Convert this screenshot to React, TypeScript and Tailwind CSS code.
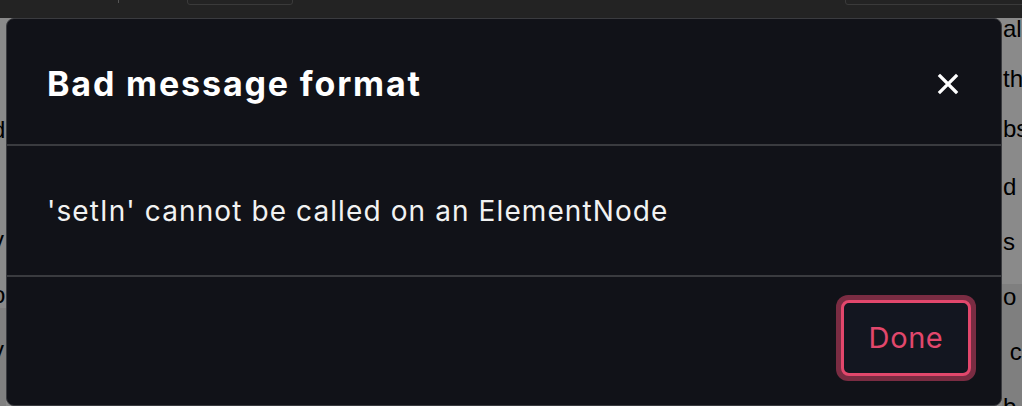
import React from "react";

const rightWords = [
  { t: "al", h: "h-[50px]" },
  { t: "th", h: "h-[50px]" },
  { t: "bs", h: "h-[58px]" },
  { t: "d", h: "h-[55px]" },
  { t: "s", h: "h-[55px]" },
  { t: "o", h: "h-[55px]" },
  { t: " c", h: "h-[55px]" },
  { t: "b", h: "h-[55px]" },
];

export default function App() {
  return (
    <div
      className="relative w-[1022px] h-[406px] overflow-hidden bg-[#8a8a8a]"
      style={{ fontFamily: '"Liberation Sans", Arial, sans-serif' }}
    >
      {/* dimmed page header */}
      <div className="h-[18px] bg-[#232323] relative">
        <div className="absolute left-[187px] top-[-6px] w-[106px] h-[11px] rounded-[3px] border border-[#3a3a3a]" />
        <div className="absolute left-[845px] top-[-6px] w-[200px] h-[11px] rounded-[3px] border border-[#3a3a3a]" />
        <div className="absolute left-[118px] top-[0px] w-[1px] h-[3px] bg-[#555]" />
      </div>
      {/* lower darker band of page */}
      <div className="absolute left-[1002px] top-[284px] w-[20px] h-[122px] bg-[#7f7f7f]" />
      <div className="absolute left-0 top-[308px] w-[6px] h-[98px] bg-[#808080]" />
      {/* dimmed page content on the right */}
      <div className="absolute left-[1003px] top-[4px] flex flex-col text-[24px] leading-[50px] text-black">
        {rightWords.map((w, i) => (
          <div key={i} className={`${w.h} whitespace-pre`}>{w.t}</div>
        ))}
      </div>
      {/* left strip content */}
      <div className="absolute left-[-8px] top-[105px] flex flex-col text-[24px] leading-[50px] text-black">
        <div className="h-[110px]">d</div>
        <div className="h-[55px]">v</div>
        <div className="h-[55px]">o</div>
        <div className="h-[55px]">v</div>
      </div>

      {/* Modal */}
      <div
        className="absolute left-[6px] top-[18px] w-[996px] h-[388px] rounded-[8px] border border-[#3a3b3f] bg-[#111218] flex flex-col text-white"
        style={{ fontFamily: 'Inter, "Noto Sans", sans-serif' }}
      >
        <div className="h-[127px] flex items-center justify-between pl-[40px] pr-[42px] border-b-2 border-[#3a3b3f]">
          <h2 className="text-[34px] font-bold tracking-[1.85px] leading-none pt-[4px]">Bad message format</h2>
          <svg width="22" height="22" viewBox="0 0 22 22" className="mt-[4px]">
            <path d="M3 3 L19 19 M19 3 L3 19" stroke="#fff" strokeWidth="3.2" strokeLinecap="square" />
          </svg>
        </div>
        <div className="h-[131px] flex items-center pl-[40px] border-b-2 border-[#3a3b3f]">
          <p className="text-[28px] tracking-[1.1px] text-[#f2f2f2] leading-none">'setIn' cannot be called on an ElementNode</p>
        </div>
        <div className="flex-1 flex justify-end items-start pt-[18px] pr-[25px]">
          <button className="w-[140px] h-[86px] rounded-[12px] bg-[#7a2c42] p-[5px]">
            <span className="flex w-full h-full items-center justify-center rounded-[8px] border-[3px] border-[#e2476c] bg-[#131620] text-[#e2476c] text-[29px] tracking-[0.6px]">
              Done
            </span>
          </button>
        </div>
      </div>
    </div>
  );
}
